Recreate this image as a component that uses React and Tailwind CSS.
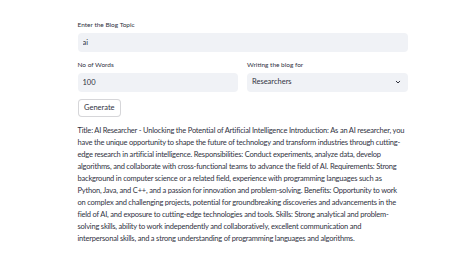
import React, { useState } from 'react';

function Label({ children }) {
  return (
    <div className="h-[11px] mb-[2px] flex items-center text-[6.5px] leading-none text-[#31333f]">
      {children}
    </div>
  );
}

// Lines are kept as in the original rendering so the wrap points match.
const blogLines = [
  "Title: AI Researcher - Unlocking the Potential of Artificial Intelligence Introduction: As an AI researcher, you",
  "have the unique opportunity to shape the future of technology and transform industries through cutting-",
  "edge research in artificial intelligence. Responsibilities: Conduct experiments, analyze data, develop",
  "algorithms, and collaborate with cross-functional teams to advance the field of AI. Requirements: Strong",
  "background in computer science or a related field, experience with programming languages such as",
  "Python, Java, and C++, and a passion for innovation and problem-solving. Benefits: Opportunity to work",
  "on complex and challenging projects, potential for groundbreaking discoveries and advancements in the",
  "field of AI, and exposure to cutting-edge technologies and tools. Skills: Strong analytical and problem-",
  "solving skills, ability to work independently and collaboratively, excellent communication and",
  "interpersonal skills, and a strong understanding of programming languages and algorithms.",
];

function App() {
  const [topic, setTopic] = useState('ai');
  const [words, setWords] = useState('100');

  return (
    <div className="min-h-screen bg-white font-['Lato',sans-serif] text-[#31333f]">
      <div className="ml-[77.5px] w-[330px] pt-[20px] flex flex-col gap-[7.5px]">
        <div>
          <Label>Enter the Blog Topic</Label>
          <input
            value={topic}
            onChange={(e) => setTopic(e.target.value)}
            className="block w-full h-[19px] rounded-[4px] bg-[#f0f2f6] px-[5px] text-[7.5px] text-[#31333f] outline-none"
          />
        </div>

        <div className="grid grid-cols-2 gap-[9px]">
          <div>
            <Label>No of Words</Label>
            <input
              value={words}
              onChange={(e) => setWords(e.target.value)}
              className="block w-full h-[19px] rounded-[4px] bg-[#f0f2f6] px-[5px] text-[7.5px] text-[#31333f] outline-none"
            />
          </div>
          <div>
            <Label>Writing the blog for</Label>
            <div className="h-[19px] rounded-[4px] bg-[#f0f2f6] pl-[5px] pr-[7px] flex items-center justify-between text-[7.5px]">
              <span>Researchers</span>
              <svg width="6" height="6" viewBox="0 0 24 24" fill="none" stroke="#31333f" strokeWidth="4" strokeLinecap="round" strokeLinejoin="round">
                <path d="M5 9l7 7 7-7" />
              </svg>
            </div>
          </div>
        </div>

        <div className="flex">
          <button className="block h-[18px] px-[5.5px] rounded-[4px] border border-[#31333f]/20 bg-white text-[7.5px] leading-none text-[#31333f]">
            Generate
          </button>
        </div>

        <p className="text-[7.5px] leading-[12px] tracking-[-0.2px] text-[#31333f]">
          {blogLines.map((line) => (
            <span key={line} className="block whitespace-nowrap">{line}</span>
          ))}
        </p>
      </div>
    </div>
  );
}

export default App;
